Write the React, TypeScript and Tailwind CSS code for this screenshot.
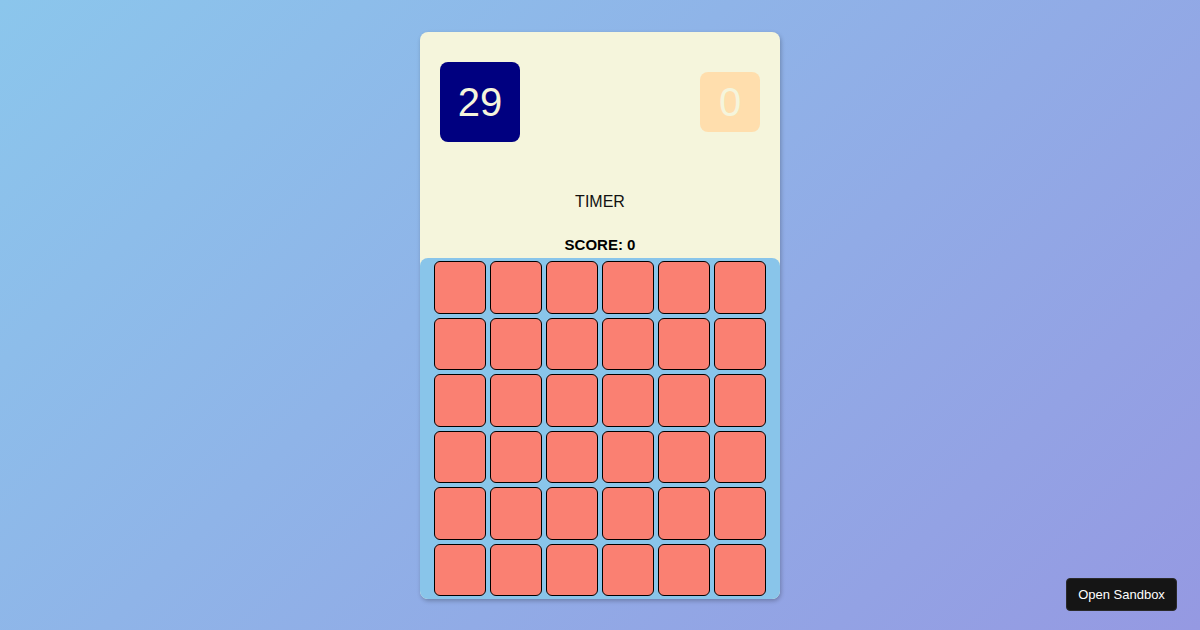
import React from "react";

const ROWS = 6;
const COLS = 6;

export default function App() {
  const tiles = Array.from({ length: ROWS * COLS }, (_, i) => i);

  return (
    <div
      className="relative h-[630px] w-full overflow-hidden bg-[linear-gradient(135deg,#8BC6EC_0%,#9599E2_100%)] pt-[32px]"
      style={{ fontFamily: '"Liberation Sans", Arial, sans-serif' }}
    >
      <div className="mx-auto flex h-[567px] w-[360px] flex-col overflow-hidden rounded-lg bg-[#f5f5dc] shadow-[1px_2px_4px_rgba(0,0,0,0.25)]">
        <div className="flex items-center justify-between px-5 pt-[30px]">
          <div className="flex h-[80px] w-[80px] items-center justify-center rounded-lg bg-[#000080] text-[40px] leading-none text-[#f5f5dc]">
            29
          </div>
          <div className="flex h-[60px] w-[60px] items-center justify-center rounded-lg bg-[#ffdead] text-[40px] leading-none text-[#f5f5dc]">
            0
          </div>
        </div>

        <p className="mt-[51px] text-center text-[16px] leading-[18px] text-[#111]">TIMER</p>
        <p className="mt-[25px] text-center text-[15px] font-bold leading-[18px] text-black">SCORE: 0</p>

        <div className="mt-[4px] flex-1 rounded-t-lg bg-[#89c5ea] px-[14px] pb-[2px] pt-[3px]">
          <div className="grid h-[335px] grid-cols-6 grid-rows-6 gap-[4px]">
            {tiles.map((t) => (
              <div key={t} className="rounded-[6px] border border-black bg-[#fa8072]" />
            ))}
          </div>
        </div>
      </div>

      <button className="absolute bottom-[19px] right-[23px] h-[33px] w-[111px] rounded-[4px] border border-[#2a2a2a] bg-[#151515] text-[13px] text-white">
        Open Sandbox
      </button>
    </div>
  );
}
